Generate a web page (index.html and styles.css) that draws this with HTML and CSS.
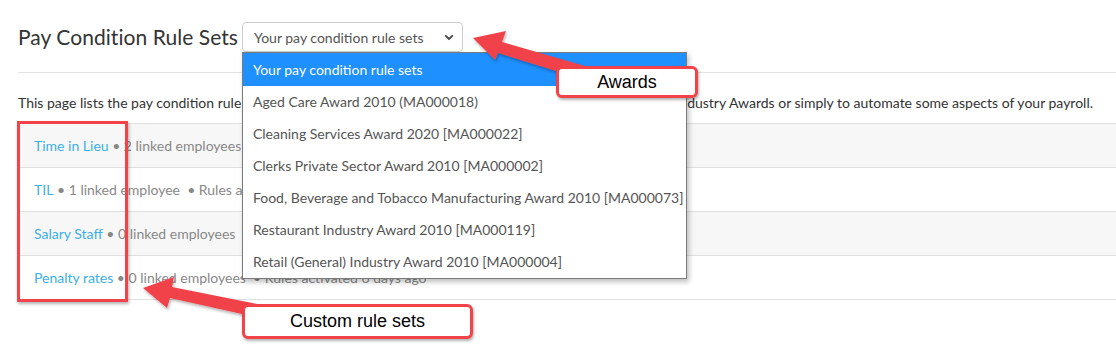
FILE: index.html
```html
<!DOCTYPE html>
<html>
<head>
<meta charset="utf-8">
<link rel="stylesheet" href="styles.css">
</head>
<body>
<div class="page">
  <header class="head">
    <h1 class="title">Pay Condition Rule Sets</h1>
    <div class="picker">
      <div class="select">
        <span>Your pay condition rule sets</span>
        <svg class="chev" width="10" height="7" viewBox="0 0 10 7"><path d="M1.2 1.3 L5 5 L8.8 1.3" fill="none" stroke="#444" stroke-width="1.8"/></svg>
      </div>
      <ul class="options">
        <li class="opt active">Your pay condition rule sets</li>
        <li class="opt">Aged Care Award 2010 (MA000018)</li>
        <li class="opt">Cleaning Services Award 2020 [MA000022]</li>
        <li class="opt">Clerks Private Sector Award 2010 [MA000002]</li>
        <li class="opt">Food, Beverage and Tobacco Manufacturing Award 2010 [MA000073]</li>
        <li class="opt">Restaurant Industry Award 2010 [MA000119]</li>
        <li class="opt">Retail (General) Industry Award 2010 [MA000004]</li>
      </ul>
    </div>
  </header>
  <hr class="rule-line">
  <p class="intro">This page lists the pay condition rule sets that have been set up for your team. Use rule sets to comply with Industry Awards or simply to automate some aspects of your payroll.</p>
  <ul class="rules">
    <li class="row alt"><a class="name">Time in Lieu</a><span class="meta"> &bull; 2 linked employees &nbsp;&bull; Rules activated 4 days ago</span></li>
    <li class="row"><a class="name">TIL</a><span class="meta"> &bull; 1 linked employee &nbsp;&bull; Rules activated 5 days ago</span></li>
    <li class="row alt"><a class="name">Salary Staff</a><span class="meta"> &bull; 0 linked employees &nbsp;&bull; Rules activated 6 days ago</span></li>
    <li class="row"><a class="name">Penalty rates</a><span class="meta"> &bull; 0 linked employees &nbsp;&bull; Rules activated 6 days ago</span></li>
  </ul>
</div>

<div class="frame frame-rules"></div>
<svg class="arrows" width="1116" height="346" viewBox="0 0 1116 346">
  <defs>
    <filter id="sh" x="-20%" y="-20%" width="140%" height="140%">
      <feDropShadow dx="1" dy="2" stdDeviation="1.5" flood-color="#000" flood-opacity="0.3"/>
    </filter>
  </defs>
  <polygon filter="url(#sh)" fill="#f2434a" points="473,38 506,31 502,42 585,66 582,79 498,53 495,60"/>
  <polygon filter="url(#sh)" fill="#f2434a" points="143,288 174,277 172,287 262,305 260,318 170,298 167,308"/>
</svg>
<div class="label label-awards">Awards</div>
<div class="label label-custom">Custom rule sets</div>
</body>
</html>
```

FILE: styles.css
```css
* { box-sizing: border-box; }
html, body { margin: 0; padding: 0; background: #fff; }
body {
  width: 1116px;
  height: 346px;
  overflow: hidden;
  position: relative;
  font-family: "Lato", "Liberation Sans", sans-serif;
  color: #333;
}
.page { padding: 22px 0 0 18px; }
.head { display: flex; align-items: center; height: 30px; }
.title {
  margin: 0 4px 0 0;
  font-size: 21px;
  font-weight: 400;
  color: #333;
  line-height: 30px;
  letter-spacing: 0.05px;
}
.picker { position: relative; }
.select {
  width: 221px;
  height: 30px;
  border: 1px solid #ccc;
  border-radius: 4px;
  display: flex;
  align-items: center;
  justify-content: space-between;
  padding: 0 8px 0 11px;
  font-size: 14px;
  color: #555;
  background: #fff;
}
.chev { display: block; }
.options {
  position: absolute;
  left: 0;
  top: 30px;
  width: 445px;
  margin: 0;
  padding: 0;
  list-style: none;
  border: 1px solid #7b7b7b;
  background: #fff;
  box-shadow: 2px 3px 5px rgba(0,0,0,0.25);
  z-index: 5;
}
.opt {
  height: 32px;
  line-height: 32px;
  padding-left: 10px;
  font-size: 14px;
  color: #555;
  white-space: nowrap;
}
.opt.active { background: #1e90ff; color: #fff; height: 33px; line-height: 33px; }
.rule-line {
  margin: 20px 0 0 0;
  border: 0;
  border-top: 1px solid #e3e3e3;
  height: 0;
}
.intro {
  margin: 20px 0 10px 0;
  font-size: 14px;
  line-height: 20px;
  color: #333;
  white-space: nowrap;
}
.rules { list-style: none; margin: 0; padding: 0; border-bottom: 1px solid #e0e0e0; }
.row {
  height: 44px;
  border-top: 1px solid #e0e0e0;
  padding-left: 16px;
  display: flex;
  align-items: center;
  font-size: 14px;
  white-space: pre;
}
.row.alt { background: #f7f7f7; }
.name { color: #3cb0ea; text-decoration: none; }
.meta { color: #888; }
.frame {
  position: absolute;
  z-index: 10;
  border: 3px solid #f2434a;
  box-shadow: 1px 2px 3px rgba(0,0,0,0.3);
}
.frame-rules { left: 17px; top: 121px; width: 111px; height: 181px; }
.arrows { position: absolute; left: 0; top: 0; z-index: 10; }
.label {
  position: absolute;
  z-index: 11;
  background: #fff;
  border: 3px solid #f2434a;
  border-radius: 6px;
  box-shadow: 1px 2px 3px rgba(0,0,0,0.3);
  font-family: "Liberation Sans", Arial, sans-serif;
  font-size: 18px;
  color: #000;
  display: flex;
  align-items: center;
  justify-content: center;
}
.label-awards { left: 556px; top: 66px; width: 142px; height: 32px; }
.label-custom { left: 242px; top: 304px; width: 231px; height: 35px; }
```
